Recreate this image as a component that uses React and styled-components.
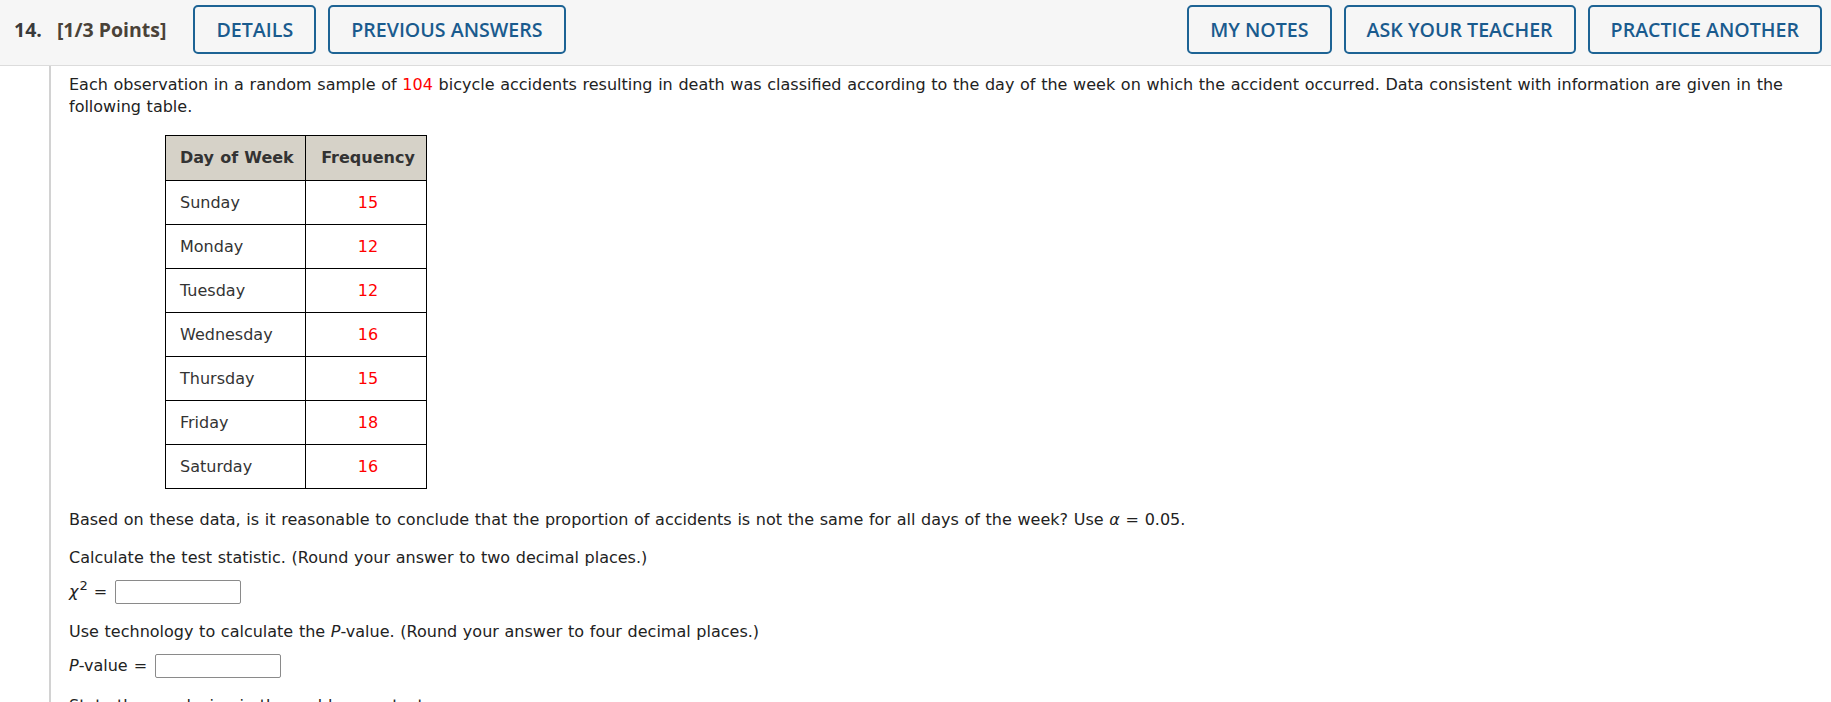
import React from 'react'
import styled, { createGlobalStyle } from 'styled-components'

const GlobalStyle = createGlobalStyle`
  html, body {
    margin: 0;
    padding: 0;
    background: #fff;
  }
  body {
    font-family: "DejaVu Sans", Verdana, sans-serif;
    color: #222;
  }
`

const rows = [
  ['Sunday', 15],
  ['Monday', 12],
  ['Tuesday', 12],
  ['Wednesday', 16],
  ['Thursday', 15],
  ['Friday', 18],
  ['Saturday', 16],
]

const Header = styled.div`
  display: flex;
  align-items: center;
  box-sizing: border-box;
  height: 66px;
  padding: 5px 9px 11px 14px;
  background: #f6f6f6;
  border-bottom: 1px solid #dcdcdc;
  font-family: "Open Sans", "Noto Sans", sans-serif;
`

const Number = styled.span`
  font-size: 19.5px;
  font-weight: 700;
  color: #3a3a3a;
`

const Points = styled.span`
  margin-left: 15px;
  font-size: 19.5px;
  font-weight: 700;
  color: #4a4238;
`

const ButtonGroup = styled.div`
  display: flex;
  gap: 12px;
  margin-left: ${p => (p.$push ? 'auto' : '27px')};
`

const Button = styled.button`
  box-sizing: border-box;
  height: 49px;
  padding: 0 21px;
  background: transparent;
  border: 2px solid #1d6394;
  border-radius: 5px;
  color: #1a5b8e;
  font-family: "Open Sans", "Noto Sans", sans-serif;
  font-size: 19.6px;
  font-weight: 600;
  cursor: pointer;
`

const Body = styled.div`
  margin-left: 49px;
  padding: 8px 40px 0 18px;
  border-left: 2px solid #d2d2d2;
  min-height: 700px;
  font-size: 16px;
  word-spacing: 0.6px;
  line-height: 22px;
`

const Para = styled.p`
  margin: 0;
  & + & {
    margin-top: 16px;
  }
`

const Red = styled.span`
  color: #ff0000;
`

const Table = styled.table`
  border-collapse: collapse;
  margin: 17px 0 20px 96px;
  color: #333;
`

const HeadCell = styled.th`
  box-sizing: border-box;
  height: 45px;
  padding: 0 10px 0 14px;
  background: #d6d2c8;
  border: 1px solid #000;
  font-weight: 700;
  text-align: ${p => (p.$center ? 'center' : 'left')};
  width: ${p => p.$width}px;
`

const Cell = styled.td`
  box-sizing: border-box;
  height: 44px;
  padding: 0 10px 0 14px;
  border: 1px solid #000;
  text-align: ${p => (p.$center ? 'center' : 'left')};
  color: ${p => (p.$red ? '#ff0000' : '#333')};
`

const Question = styled.div`
  margin-top: 16px;
`

const AnswerRow = styled.div`
  display: flex;
  align-items: center;
  gap: 6px;
  height: 26px;
  margin-top: 10px;
`

const Input = styled.input`
  box-sizing: border-box;
  width: 126px;
  height: 24px;
  margin-left: 2px;
  border: 1px solid #8a8a8a;
  border-radius: 2px;
  background: #fff;
`

const Sym = styled.i`
  font-style: italic;
`

const Sup = styled.sup`
  font-size: 13px;
  line-height: 0;
  vertical-align: 7px;
  margin-left: 1px;
`

const App = () => (
  <>
    <GlobalStyle />
    <Header>
      <Number>14.</Number>
      <Points>[1/3 Points]</Points>
      <ButtonGroup>
        <Button>DETAILS</Button>
        <Button>PREVIOUS ANSWERS</Button>
      </ButtonGroup>
      <ButtonGroup $push>
        <Button>MY NOTES</Button>
        <Button>ASK YOUR TEACHER</Button>
        <Button>PRACTICE ANOTHER</Button>
      </ButtonGroup>
    </Header>

    <Body>
      <Para>
        Each observation in a random sample of <Red>104</Red> bicycle accidents resulting in death was
        classified according to the day of the week on which the accident occurred. Data consistent with
        information are given in the following table.
      </Para>

      <Table>
        <thead>
          <tr>
            <HeadCell $width={140}>Day of Week</HeadCell>
            <HeadCell $width={121} $center>Frequency</HeadCell>
          </tr>
        </thead>
        <tbody>
          {rows.map(([day, freq]) => (
            <tr key={day}>
              <Cell>{day}</Cell>
              <Cell $center $red>{freq}</Cell>
            </tr>
          ))}
        </tbody>
      </Table>

      <Para>
        Based on these data, is it reasonable to conclude that the proportion of accidents is not the same
        for all days of the week? Use <Sym>α</Sym> = 0.05.
      </Para>

      <Question>
        <Para>Calculate the test statistic. (Round your answer to two decimal places.)</Para>
        <AnswerRow>
          <span><Sym>χ</Sym><Sup>2</Sup></span>
          <span>=</span>
          <Input type="text" />
        </AnswerRow>
      </Question>

      <Question>
        <Para>Use technology to calculate the <Sym>P</Sym>-value. (Round your answer to four decimal places.)</Para>
        <AnswerRow>
          <span><Sym>P</Sym>-value</span>
          <span>=</span>
          <Input type="text" />
        </AnswerRow>
      </Question>

      <Question>
        <Para>State the conclusion in the problem context.</Para>
      </Question>
    </Body>
  </>
)

export default App
